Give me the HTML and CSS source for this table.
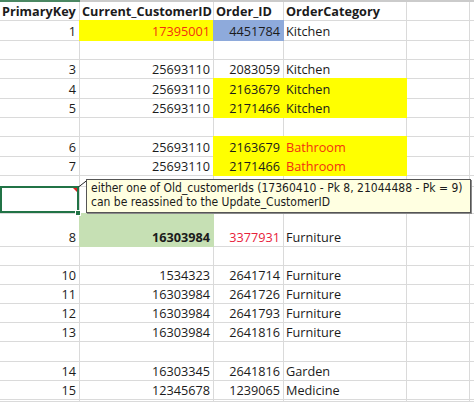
FILE: index.html
```html
<!DOCTYPE html>
<html>
<head>
<meta charset="utf-8">
<link rel="stylesheet" href="styles.css">
</head>
<body>
<div class="sheet">
  <div class="c top sel"></div><div class="c top"></div><div class="c top"></div><div class="c top"></div><div class="c top"></div><div class="c top"></div>

  <div class="c h">PrimaryKey</div><div class="c h">Current_CustomerID</div><div class="c h">Order_ID</div><div class="c h">OrderCategory</div><div class="c"></div><div class="c"></div>

  <div class="c r">1</div><div class="c r y red">17395001</div><div class="c r b">4451784</div><div class="c">Kitchen</div><div class="c"></div><div class="c"></div>

  <div class="c"></div><div class="c"></div><div class="c"></div><div class="c"></div><div class="c"></div><div class="c"></div>

  <div class="c r">3</div><div class="c r">25693110</div><div class="c r">2083059</div><div class="c">Kitchen</div><div class="c"></div><div class="c"></div>

  <div class="c r">4</div><div class="c r">25693110</div><div class="c r y">2163679</div><div class="c y">Kitchen</div><div class="c"></div><div class="c"></div>

  <div class="c r">5</div><div class="c r">25693110</div><div class="c r y">2171466</div><div class="c y">Kitchen</div><div class="c"></div><div class="c"></div>

  <div class="c"></div><div class="c"></div><div class="c"></div><div class="c"></div><div class="c"></div><div class="c"></div>

  <div class="c r">6</div><div class="c r">25693110</div><div class="c r y">2163679</div><div class="c y red">Bathroom</div><div class="c"></div><div class="c"></div>

  <div class="c r">7</div><div class="c r">25693110</div><div class="c r y">2171466</div><div class="c y red">Bathroom</div><div class="c"></div><div class="c"></div>

  <div class="c"></div><div class="c"></div><div class="c"></div><div class="c"></div><div class="c"></div><div class="c"></div>

  <div class="c active"><span class="sel-box"></span><span class="handle"></span><span class="note-mark"></span></div><div class="c"></div><div class="c"></div><div class="c"></div><div class="c"></div><div class="c"></div>

  <div class="c r">8</div><div class="c r g h">16303984</div><div class="c r red2">3377931</div><div class="c">Furniture</div><div class="c"></div><div class="c"></div>

  <div class="c"></div><div class="c"></div><div class="c"></div><div class="c"></div><div class="c"></div><div class="c"></div>

  <div class="c r">10</div><div class="c r">1534323</div><div class="c r">2641714</div><div class="c">Furniture</div><div class="c"></div><div class="c"></div>

  <div class="c r">11</div><div class="c r">16303984</div><div class="c r">2641726</div><div class="c">Furniture</div><div class="c"></div><div class="c"></div>

  <div class="c r">12</div><div class="c r">16303984</div><div class="c r">2641793</div><div class="c">Furniture</div><div class="c"></div><div class="c"></div>

  <div class="c r">13</div><div class="c r">16303984</div><div class="c r">2641816</div><div class="c">Furniture</div><div class="c"></div><div class="c"></div>

  <div class="c"></div><div class="c"></div><div class="c"></div><div class="c"></div><div class="c"></div><div class="c"></div>

  <div class="c r">14</div><div class="c r">16303345</div><div class="c r">2641816</div><div class="c">Garden</div><div class="c"></div><div class="c"></div>

  <div class="c r">15</div><div class="c r">12345678</div><div class="c r">1239065</div><div class="c">Medicine</div><div class="c"></div><div class="c"></div>

  <div class="c"></div><div class="c"></div><div class="c"></div><div class="c"></div><div class="c"></div><div class="c"></div>

  <svg class="connector" width="10" height="9" viewBox="0 0 10 9"><line x1="0.5" y1="8" x2="9.5" y2="1" stroke="#222" stroke-width="1"/></svg>
  <div class="comment">either one of Old_customerIds (17360410 - Pk 8, 21044488 - Pk = 9)<br>can be reassined to the Update_CustomerID</div>
</div>
</body>
</html>
```
FILE: styles.css
```css
* { box-sizing: border-box; }
html, body { margin: 0; padding: 0; background: #fff; }
body { width: 474px; height: 402px; overflow: hidden; }

.sheet {
  position: relative;
  display: grid;
  grid-template-columns: 80px 134px 70px 123px 63px 1fr;
  grid-template-rows: 2px 19px 20px 19px 19px 20px 19px 19px 20px 19px 11px 27px 33px 19px 19px 19px 19px 19px 20px 19px 19px 1fr;
  height: 402px;
  font-family: "Open Sans", sans-serif;
  font-size: 12.7px;
  color: #1b1b1b;
}

.c {
  border-right: 1px solid #dadada;
  border-bottom: 1px solid #dadada;
  display: flex;
  align-items: flex-end;
  padding: 0 3px 1px 2px;
  line-height: 16px;
  white-space: nowrap;
  min-width: 0;
}
.r { justify-content: flex-end; }
.h { font-weight: 700; }

.top { background: #cbcbcb; border: 0; }
.top.sel { background: #4a8762; }

.y { background: #ffff00; border-color: #ffff00; margin: -1px 0 0 -1px; padding-left: 3px; }
.b { background: #8eaadb; border-color: #8eaadb; margin: -1px 0 0 -1px; }
.g { background: #c6e0b4; border-color: #c6e0b4; margin: -1px 0 0 -1px; }
.red { color: #f2300f; }
.red2 { color: #e8203a; }

.active { position: relative; }
.sel-box {
  position: absolute;
  top: -1px; left: 0; right: 0; bottom: 0;
  border: 2px solid #217346;
}
.handle {
  position: absolute;
  right: -2px; bottom: -3px;
  width: 6px; height: 6px;
  background: #217346;
  border: 1px solid #fff;
}
.note-mark {
  position: absolute;
  top: 1px; right: 2px;
  width: 0; height: 0;
  border-left: 4px solid transparent;
  border-top: 4px solid #e02020;
}

.connector {
  position: absolute;
  left: 78px; top: 179px;
  z-index: 2;
}
.comment {
  position: absolute;
  left: 86px; top: 179px;
  width: 385px; height: 34px;
  background: #ffffe1;
  border: 1px solid #555;
  box-shadow: 1px 1px 0 #8a8a8a;
  padding: 1px 4px 0 4px;
  font-family: "DejaVu Sans Condensed", "DejaVu Sans", sans-serif;
  font-size: 12px;
  line-height: 14px;
  color: #1b1b1b;
  white-space: nowrap;
  z-index: 3;
}
```
